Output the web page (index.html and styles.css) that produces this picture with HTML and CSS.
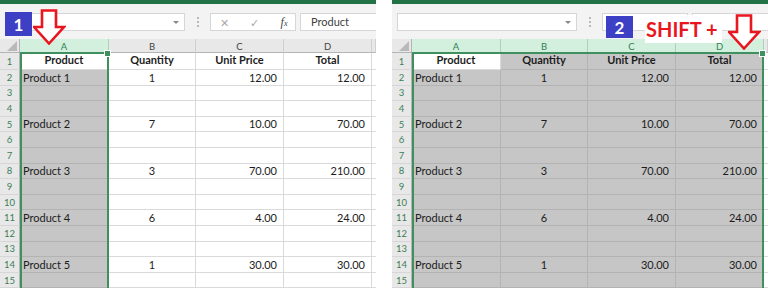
FILE: index.html
```html
<!DOCTYPE html>
<html>
<head>
    <title>Select columns with Shift</title>
    <meta charset="UTF-8">
    <link rel="stylesheet" href="styles.css">
</head>
<body>
    <div class="panels">
        <div class="sheet" data-selected="A">
            <div class="title-strip"></div>
            <div class="formula-bar">
                <div class="name-box"><span class="drop"></span></div>
                <div class="grip"><i></i><i></i><i></i></div>
                <div class="fx-buttons">
                    <span class="fx-cancel">✕</span>
                    <span class="fx-enter">✓</span>
                    <span class="fx-label"><i>f</i><small>x</small></span>
                </div>
                <div class="formula-input">Product</div>
            </div>
            <div class="grid"></div>
            <div class="selection selection-a"></div>
            <div class="badge badge-1">1</div>
            <svg class="arrow arrow-1" width="33" height="36" viewBox="0 0 33 36">
                <polygon points="9,1.5 23,1.5 23,18 31,18 16,34.5 1,18 9,18" />
            </svg>
        </div>

        <!-- second step: badge and label cover the formula buttons -->
        <div class="sheet" data-selected="A,B,C,D">
            <div class="title-strip"></div>
            <div class="formula-bar">
                <div class="name-box"><span class="drop"></span></div>
                <div class="grip"><i></i><i></i><i></i></div>
                <div class="fx-buttons"></div>
                <div class="formula-input"></div>
            </div>
            <div class="grid"></div>
            <div class="selection selection-ad"></div>
            <div class="badge badge-2">2</div>
            <div class="shift-label">SHIFT +</div>
            <svg class="arrow arrow-2" width="33" height="36" viewBox="0 0 33 36">
                <polygon points="9,1.5 23,1.5 23,18 31,18 16,34.5 1,18 9,18" />
            </svg>
        </div>
    </div>

    <script>
        const cols = ['A', 'B', 'C', 'D', ''];
        const align = ['left', 'center', 'right', 'right'];
        const data = {
            1: ['Product', 'Quantity', 'Unit Price', 'Total'],
            2: ['Product 1', '1', '12.00', '12.00'],
            5: ['Product 2', '7', '10.00', '70.00'],
            8: ['Product 3', '3', '70.00', '210.00'],
            11: ['Product 4', '6', '4.00', '24.00'],
            14: ['Product 5', '1', '30.00', '30.00']
        };

        document.querySelectorAll('.sheet').forEach(sheet => {
            const grid = sheet.querySelector('.grid');
            const selected = sheet.dataset.selected.split(',');

            const addCell = (cls, text) => {
                const el = document.createElement('div');
                el.className = cls;
                if (text) el.textContent = text;
                grid.appendChild(el);
            };

            addCell('corner');
            cols.forEach(c => {
                addCell('col-head' + (selected.includes(c) ? ' picked' : ''), c);
            });

            for (let r = 1; r <= 15; r++) {
                addCell('row-head', String(r));
                cols.forEach((c, i) => {
                    let cls = 'cell';
                    if (i < 4) cls += ' ' + align[i];
                    if (r === 1) cls += ' title';
                    if (r === 1 && c === 'A') cls += ' active';
                    else if (selected.includes(c)) cls += ' picked';
                    addCell(cls, data[r] && i < 4 ? data[r][i] : '');
                });
            }
        });
    </script>
</body>
</html>
```

FILE: styles.css
```css
body {
    margin: 0;
    background: #fff;
    font-family: 'Lato', 'Liberation Sans', sans-serif;
}

.panels {
    display: flex;
    gap: 16px;
}

.sheet {
    position: relative;
    width: 376px;
    height: 288px;
    overflow: hidden;
    background: #f3f3f3;
}

.title-strip {
    height: 4px;
    background: #217346;
}

.formula-bar {
    display: flex;
    align-items: center;
    height: 35px;
    padding-left: 5px;
}

.name-box,
.fx-buttons,
.formula-input {
    box-sizing: border-box;
    height: 18px;
    background: #fff;
    border: 1px solid #d6d6d6;
}

.name-box {
    position: relative;
    width: 180px;
}

.drop {
    position: absolute;
    right: 5px;
    top: 7px;
    border-left: 3px solid transparent;
    border-right: 3px solid transparent;
    border-top: 3px solid #8a8a8a;
}

.grip {
    display: flex;
    flex-direction: column;
    align-items: center;
    gap: 2px;
    width: 25px;
}

.grip i {
    width: 2px;
    height: 2px;
    background: #b8b8b8;
}

.fx-buttons {
    display: grid;
    grid-template-columns: 26px 34px 26px;
    justify-items: center;
    align-items: center;
    width: 86px;
}

.fx-cancel,
.fx-enter {
    color: #a8a8a8;
    font-size: 11px;
    line-height: 16px;
}

.fx-label {
    color: #444;
    font-family: 'Liberation Serif', serif;
    font-size: 12px;
    line-height: 16px;
}

.fx-label small {
    font-size: 8px;
    font-style: italic;
}

.formula-input {
    flex: 1;
    margin-left: 4px;
    padding-left: 10px;
    border-right: none;
    color: #404040;
    font-size: 11px;
    line-height: 16px;
}

.grid {
    display: grid;
    grid-template-columns: 20px 89px 87px 88px 88px 4px;
    grid-template-rows: 14px 17px repeat(14, 15.6px);
}

.grid > div {
    box-sizing: border-box;
    white-space: nowrap;
    overflow: hidden;
}

.corner {
    position: relative;
    background: #e8e8e8;
    border-right: 1px solid #b4b4b4;
    border-bottom: 1px solid #b4b4b4;
}

.corner::after {
    content: '';
    position: absolute;
    right: 2px;
    bottom: 1px;
    border-left: 10px solid transparent;
    border-bottom: 10px solid #b9b9b9;
}

.col-head {
    display: flex;
    justify-content: center;
    align-items: flex-end;
    background: #e8e8e8;
    color: #444;
    font-size: 9.5px;
    line-height: 11px;
    border-right: 1px solid #d0d0d0;
    border-bottom: 1px solid #b4b4b4;
}

.col-head.picked {
    background: #d3f0df;
    color: #2f8052;
    border-right-color: #a9d3b8;
    border-bottom-color: #40905f;
}

.row-head {
    display: flex;
    justify-content: center;
    align-items: center;
    background: #e8e8e8;
    color: #3d7e55;
    font-size: 9.5px;
    border-right: 1px solid #b4b4b4;
    border-bottom: 1px solid #d6d6d6;
}

.cell {
    display: flex;
    align-items: flex-end;
    padding: 0 3px 1px;
    background: #fff;
    color: #1c1c1c;
    font-size: 11px;
    line-height: 12px;
    border-right: 1px solid #dadada;
    border-bottom: 1px solid #dadada;
}

.cell.center {
    justify-content: center;
}

.cell.right {
    justify-content: flex-end;
    padding-right: 6px;
}

.cell.title {
    justify-content: center;
    padding: 0 3px 3px;
    font-weight: bold;
}

.cell.picked {
    background: #c6c6c6;
    border-color: #b3b3b3;
}

.selection {
    position: absolute;
    top: 52px;
    left: 20px;
    height: 240px;
    box-sizing: border-box;
    border: 2px solid #40905f;
}

.selection::after {
    content: '';
    position: absolute;
    right: -4px;
    top: -4px;
    width: 5px;
    height: 5px;
    background: #40905f;
    border: 1px solid #fff;
}

.selection-a {
    width: 89px;
}

.selection-ad {
    width: 352px;
}

.badge {
    position: absolute;
    display: flex;
    justify-content: center;
    align-items: center;
    width: 27px;
    background: #3d3fc4;
    color: #fff;
    font-size: 17px;
    font-weight: bold;
}

.badge-1 {
    left: 5px;
    top: 12px;
    height: 24px;
}

.badge-2 {
    left: 214px;
    top: 16px;
    height: 22px;
}

.shift-label {
    position: absolute;
    left: 253px;
    top: 15px;
    width: 77px;
    height: 28px;
    padding-left: 1px;
    box-sizing: border-box;
    background: #fff;
    color: #e8161e;
    font-size: 20px;
    font-weight: bold;
    line-height: 28px;
}

.arrow {
    position: absolute;
}

.arrow polygon {
    fill: #fff;
    stroke: #e8161e;
    stroke-width: 2.6;
    stroke-linejoin: miter;
}

.arrow-1 {
    left: 33px;
    top: 9px;
}

.arrow-2 {
    left: 336px;
    top: 14px;
}
```
